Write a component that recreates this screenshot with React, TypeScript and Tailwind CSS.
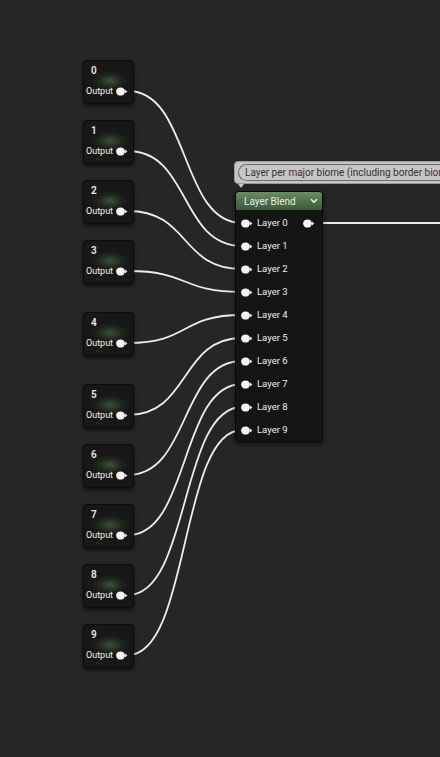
import React from 'react';

const font = { fontFamily: 'Roboto, "Liberation Sans", sans-serif' };

const sourceTops = [60, 120, 180, 240, 312, 384, 444, 504, 564, 624];

function Pin() {
  return (
    <svg width="12" height="9" viewBox="0 0 12 9" className="shrink-0">
      <ellipse cx="4.5" cy="4.5" rx="4.4" ry="4.1" fill="#f4f4f4" />
      <path d="M9 2.6 L11.4 4.5 L9 6.4 Z" fill="#e6e6e6" />
    </svg>
  );
}

function ConstantNode({ index, top }: { index: number; top: number }) {
  return (
    <div
      className="absolute left-[83px] w-[51px] h-[44px] rounded-[4px] border border-[#0c0c0c] bg-[#171717] shadow-[0_2px_4px_rgba(0,0,0,0.6)] overflow-hidden"
      style={{ top }}
    >
      <div className="absolute left-[8px] top-[10px] w-[36px] h-[20px] bg-[radial-gradient(ellipse_at_center,rgba(90,130,80,0.55)_0%,rgba(60,95,55,0.2)_45%,rgba(0,0,0,0)_75%)]" />
      <div className="absolute left-[7px] top-[2px] text-[10px] font-semibold text-[#e8e8e8]">{index}</div>
      <div className="absolute left-[2px] top-[26px] flex items-center gap-[3px]">
        <span className="text-[9px] text-[#f0f0f0] leading-none">Output</span>
        <Pin />
      </div>
    </div>
  );
}

function wirePath(x0: number, y0: number, x1: number, y1: number) {
  const t = 62;
  return `M${x0} ${y0} C${x0 + t} ${y0} ${x1 - t} ${y1} ${x1} ${y1}`;
}

export default function App() {
  return (
    <div className="relative w-[440px] h-[757px] overflow-hidden bg-[#262626]" style={font}>
      <svg className="absolute inset-0" width="440" height="757">
        {sourceTops.map((top, i) => (
          <path
            key={i}
            d={wirePath(128, top + 31, 242, 223 + 23 * i)}
            stroke="#ececec"
            strokeWidth="1.8"
            fill="none"
          />
        ))}
        <path d="M314 223 L440 223" stroke="#ececec" strokeWidth="1.8" fill="none" />
      </svg>

      {sourceTops.map((top, i) => (
        <ConstantNode key={i} index={i} top={top} />
      ))}

      {/* comment bubble */}
      <div className="absolute left-[234px] top-[161px] w-[220px] h-[23px] rounded-[4px] bg-[#c6c6c6] border border-[#9a9a9a] flex items-center overflow-hidden">
        <div className="ml-[3px] h-[17px] pl-[6px] rounded-l-[9px] border-l border-y border-[#6c6c6c] flex items-center text-[10px] text-[#3a3030] whitespace-nowrap">
          Layer per major biome (including border biomes)
        </div>
      </div>
      <div className="absolute left-[238px] top-[184px] w-0 h-0 border-l-[3px] border-r-[3px] border-t-[4px] border-l-transparent border-r-transparent border-t-[#c6c6c6]" />

      {/* Layer Blend node */}
      <div className="absolute left-[235px] top-[191px] w-[88px] h-[251px] rounded-[4px] bg-[#141414] border border-[#0a0a0a] shadow-[0_2px_5px_rgba(0,0,0,0.6)] overflow-hidden">
        <div className="h-[18px] bg-[linear-gradient(180deg,#6a8d63_0%,#4d6c48_60%,#3f5a3b_100%)] flex items-center justify-between pl-[8px] pr-[4px]">
          <span className="text-[10px] text-[#e4ebe2]">Layer Blend</span>
          <svg width="8" height="6" viewBox="0 0 8 6">
            <path d="M1 1.2 L4 4.2 L7 1.2" stroke="#f0f0f0" strokeWidth="1.6" fill="none" />
          </svg>
        </div>
        <div className="flex flex-col pt-[6px] gap-[9px]">
          {Array.from({ length: 10 }).map((_, i) => (
            <div key={i} className="h-[14px] flex items-center pl-[5px]">
              <Pin />
              <span className="ml-[4px] text-[9.5px] text-[#ececec] leading-none">Layer {i}</span>
              {i === 0 && (
                <span className="ml-auto mr-[7px] flex">
                  <Pin />
                </span>
              )}
            </div>
          ))}
        </div>
      </div>
    </div>
  );
}
